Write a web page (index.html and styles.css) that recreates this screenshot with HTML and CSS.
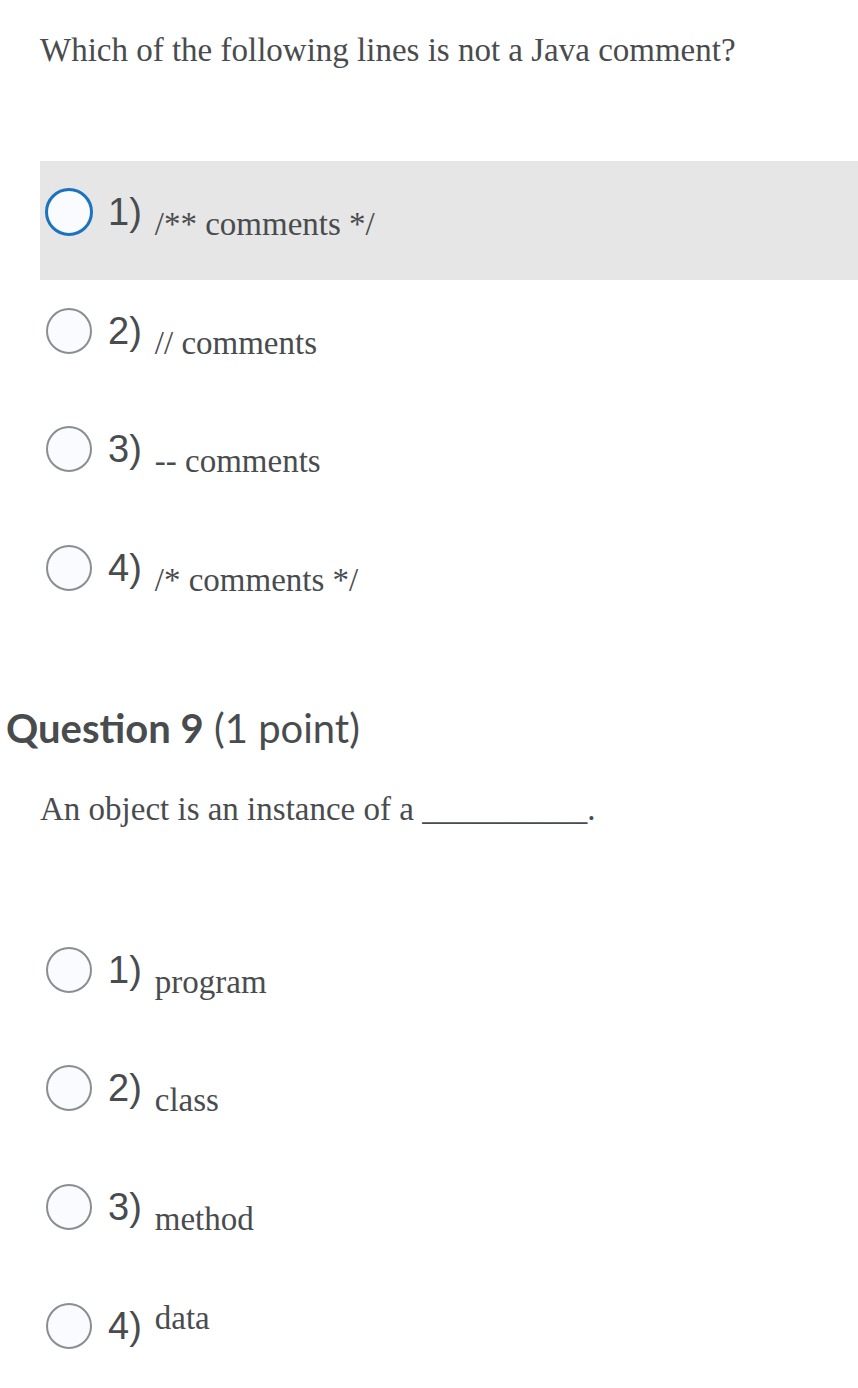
FILE: index.html
```html
<!DOCTYPE html>
<html lang="en">
<head>
<meta charset="utf-8">
<title>Quiz</title>
<link rel="stylesheet" href="styles.css">
</head>
<body>
<section class="question">
  <p class="prompt">Which of the following lines is not a Java comment?</p>
  <ul class="options">
    <li class="option option--focus"><span class="radio radio--focus"></span><span class="num">1)</span><span class="answer">/** comments */</span></li>
    <li class="option"><span class="radio"></span><span class="num">2)</span><span class="answer">// comments</span></li>
    <li class="option"><span class="radio"></span><span class="num">3)</span><span class="answer">-- comments</span></li>
    <li class="option"><span class="radio"></span><span class="num">4)</span><span class="answer">/* comments */</span></li>
  </ul>
</section>
<section class="question question--next">
  <h2 class="qtitle"><strong>Question 9</strong> (1 point)</h2>
  <p class="prompt prompt--blank">An object is an instance of a __________.</p>
  <ul class="options options--second">
    <li class="option"><span class="radio"></span><span class="num">1)</span><span class="answer">program</span></li>
    <li class="option"><span class="radio"></span><span class="num">2)</span><span class="answer">class</span></li>
    <li class="option"><span class="radio"></span><span class="num">3)</span><span class="answer">method</span></li>
    <li class="option"><span class="radio"></span><span class="num">4)</span><span class="answer answer--raised">data</span></li>
  </ul>
</section>
</body>
</html>
```
FILE: styles.css
```css
html, body {
  margin: 0;
  padding: 0;
  background: #ffffff;
  color: #494c4e;
}
body {
  width: 858px;
  overflow: hidden;
}
.question {
  padding-top: 34px;
}
.question--next {
  padding-top: 0;
}
.prompt {
  margin: 0 0 0 40px;
  font-family: "Liberation Serif", "Times New Roman", serif;
  font-size: 33px;
  line-height: 1;
  white-space: nowrap;
}
.options {
  list-style: none;
  margin: 94px 0 0 40px;
  padding: 0;
}
.options--second {
  margin-top: 93px;
}
.option {
  display: flex;
  align-items: flex-start;
  height: 118.67px;
  padding-left: 6px;
  box-sizing: border-box;
}
.option--focus {
  background: #e6e6e6;
}
.radio {
  flex: none;
  width: 46px;
  height: 46px;
  margin-top: 28px;
  border-radius: 50%;
  border: 2px solid #8a8e91;
  background: #f9fbff;
  box-sizing: border-box;
}
.radio--focus {
  border: 3.5px solid #1a73bf;
  margin-top: 27px;
  width: 48px;
  height: 48px;
  margin-left: -1px;
  margin-right: -1px;
}
.num {
  margin-top: 32px;
  margin-left: 16px;
  font-family: "Liberation Sans", Arial, Helvetica, sans-serif;
  font-size: 38px;
  line-height: 1;
}
.answer {
  margin-top: 47px;
  margin-left: 13px;
  font-family: "Liberation Serif", "Times New Roman", serif;
  font-size: 33px;
  line-height: 1;
  white-space: nowrap;
}
.answer--raised {
  margin-top: 27px;
}
.qtitle {
  margin: 72px 0 0 6px;
  font-family: Lato, "Open Sans", sans-serif;
  font-weight: 400;
  font-size: 40px;
  line-height: 1;
  color: #494c4e;
}
.qtitle strong {
  font-weight: 700;
}
.prompt--blank {
  margin-top: 45px;
}
```
